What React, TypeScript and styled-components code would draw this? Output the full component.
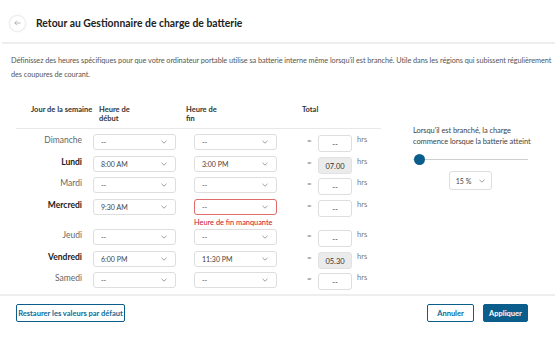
import React from "react";
import styled, { createGlobalStyle } from "styled-components";

const GlobalStyle = createGlobalStyle`
  html, body { margin: 0; padding: 0; background: #fff; }
  body { font-family: Lato, "Open Sans", sans-serif; }
  * { box-sizing: border-box; }
`;

const BLUE = "#0b5e8b";

const Page = styled.div`
  width: 560px;
  height: 338px;
  background: #fff;
  display: flex;
  flex-direction: column;
  overflow: hidden;
`;

const Header = styled.header`
  height: 44px;
  margin: 0 5px 0 2px;
  padding: 4px 0 0 7px;
  border-bottom: 2px solid #eeeeee;
  display: flex;
  align-items: center;
  gap: 10px;
`;

const BackButton = styled.button`
  width: 17px;
  height: 17px;
  border-radius: 50%;
  border: 1px solid #ececec;
  background: #fff;
  box-shadow: 0 0 2px rgba(0, 0, 0, 0.08);
  display: flex;
  align-items: center;
  justify-content: center;
  padding: 0;
  color: #8a8a8a;
`;

const Title = styled.h1`
  margin: 0;
  font-size: 10.4px;
  font-weight: 700;
  color: #222;
`;

const Description = styled.p`
  margin: 0;
  padding: 10px 8px 0 11px;
  font-size: 7.3px;
  letter-spacing: -0.05px;
  line-height: 14px;
  color: #555;
`;

const Main = styled.div`
  display: flex;
  margin-top: 23px;
`;

const Table = styled.div`
  margin-left: 16px;
  width: 365px;
`;

const HeadRow = styled.div`
  display: grid;
  grid-template-columns: 83px 87px 116px 1fr;
  padding-bottom: 5px;
  border-bottom: 1px solid #e8e8e8;
`;

const HeadCell = styled.div<{ $pad?: number }>`
  padding-left: ${(p) => p.$pad ?? 0}px;
  font-size: 7.5px;
  line-height: 9px;
  font-weight: 700;
  color: #333;
  white-space: nowrap;
`;

const Rows = styled.div`
  display: flex;
  flex-direction: column;
  gap: 3.5px;
  margin-top: 5px;
`;

const DayRow = styled.div`
  display: flex;
  align-items: flex-start;
  min-height: 18px;
`;

const DayLabel = styled.div<{ $active?: boolean }>`
  width: 66px;
  margin-right: 11px;
  text-align: right;
  font-size: 8.5px;
  line-height: 13px;
  font-weight: ${(p) => (p.$active ? 700 : 400)};
  color: ${(p) => (p.$active ? "#222" : "#666")};
`;

const SelectCol = styled.div<{ $gap?: number }>`
  width: 83px;
  margin-right: ${(p) => p.$gap ?? 0}px;
  display: flex;
  flex-direction: column;
`;

const Select = styled.div<{ $error?: boolean }>`
  height: 16px;
  border: 1px solid ${(p) => (p.$error ? "#e06b6b" : "#dedede")};
  border-radius: 3px;
  padding: 0 8px 0 7px;
  display: flex;
  align-items: center;
  justify-content: space-between;
  font-size: 7px;
  color: #444;
  background: #fff;
`;

const ErrorText = styled.div`
  margin-top: 4px;
  font-size: 7.4px;
  line-height: 7px;
  color: #c8102e;
  white-space: nowrap;
`;

const Equals = styled.div`
  width: 12px;
  padding-left: 1px;
  font-size: 8px;
  line-height: 12px;
  color: #777;
`;

const TotalBox = styled.div<{ $filled?: boolean }>`
  width: 34px;
  height: 17px;
  margin-top: 1px;
  border: 1px solid ${(p) => (p.$filled ? "#e2e2e2" : "#dedede")};
  border-radius: 3px;
  background: ${(p) => (p.$filled ? "#ebebeb" : "#fff")};
  display: flex;
  align-items: center;
  justify-content: center;
  padding-top: 2px;
  font-size: 7.5px;
  color: #333;
`;

const Unit = styled.div`
  margin-left: 5px;
  font-size: 7.5px;
  line-height: 12px;
  color: #777;
`;

const Side = styled.div`
  margin-left: 32px;
  width: 115px;
  padding-top: 20px;
  display: flex;
  flex-direction: column;
`;

const SideText = styled.div`
  font-size: 7.5px;
  letter-spacing: -0.08px;
  line-height: 11px;
  color: #444;
  white-space: nowrap;
`;

const Slider = styled.div`
  position: relative;
  margin-top: 7px;
  height: 11px;
  display: flex;
  align-items: center;
`;

const Track = styled.div`
  flex: 1;
  height: 1px;
  background: #cfcfcf;
`;

const Thumb = styled.div`
  position: absolute;
  left: 1px;
  top: 0;
  width: 11px;
  height: 11px;
  border-radius: 50%;
  background: ${BLUE};
`;

const PercentSelect = styled.div`
  align-self: center;
  margin-top: 6px;
  width: 43px;
  height: 19px;
  border: 1px solid #dedede;
  border-radius: 3px;
  display: flex;
  align-items: center;
  justify-content: center;
  gap: 8px;
  font-size: 7px;
  color: #444;
`;

const Footer = styled.footer`
  margin: auto 5px 0 0;
  height: 44px;
  border-top: 2px solid #eeeeee;
  padding: 8px 27px 0 16px;
  display: flex;
  align-items: flex-start;
`;

const Button = styled.button<{ $primary?: boolean; $w: number }>`
  width: ${(p) => p.$w}px;
  height: 18px;
  border-radius: 2px;
  border: 1px solid ${BLUE};
  background: ${(p) => (p.$primary ? BLUE : "#fff")};
  color: ${(p) => (p.$primary ? "#fff" : "#0d6a97")};
  font-family: Lato, sans-serif;
  font-size: 7.5px;
  font-weight: 700;
  padding: 0;
  white-space: nowrap;
`;

const Spacer = styled.div`
  flex: 1;
`;

const ButtonGap = styled.div`
  width: 9px;
`;

const Chevron = () => (
  <svg width="6" height="4" viewBox="0 0 6 4" fill="none">
    <path d="M0.5 0.8 L3 3.2 L5.5 0.8" stroke="#888" strokeWidth="0.8" />
  </svg>
);

const Arrow = () => (
  <svg width="7" height="6" viewBox="0 0 7 6" fill="none">
    <path d="M6.5 3 H0.8 M3 0.7 L0.8 3 L3 5.3" stroke="#999" strokeWidth="0.7" />
  </svg>
);

type Day = {
  name: string;
  start: string;
  end: string;
  total: string;
  active?: boolean;
  error?: boolean;
};

const days: Day[] = [
  { name: "Dimanche", start: "--", end: "--", total: "--" },
  { name: "Lundi", start: "8:00 AM", end: "3:00 PM", total: "07.00", active: true },
  { name: "Mardi", start: "--", end: "--", total: "--" },
  { name: "Mercredi", start: "9:30 AM", end: "--", total: "--", active: true, error: true },
  { name: "Jeudi", start: "--", end: "--", total: "--" },
  { name: "Vendredi", start: "6:00 PM", end: "11:30 PM", total: "05.30", active: true },
  { name: "Samedi", start: "--", end: "--", total: "--" },
];

export default function App() {
  return (
    <Page>
      <GlobalStyle />
      <Header>
        <BackButton aria-label="Retour">
          <Arrow />
        </BackButton>
        <Title>Retour au Gestionnaire de charge de batterie</Title>
      </Header>
      <Description>
        Définissez des heures spécifiques pour que votre ordinateur portable utilise sa batterie interne même
        lorsqu'il est branché. Utile dans les régions qui subissent régulièrement des coupures de courant.
      </Description>
      <Main>
        <Table>
          <HeadRow>
            <HeadCell $pad={15}>Jour de la semaine</HeadCell>
            <HeadCell>
              Heure de
              <br />
              début
            </HeadCell>
            <HeadCell>
              Heure de
              <br />
              fin
            </HeadCell>
            <HeadCell>Total</HeadCell>
          </HeadRow>
          <Rows>
            {days.map((d) => (
              <DayRow key={d.name}>
                <DayLabel $active={d.active}>{d.name}</DayLabel>
                <SelectCol $gap={18}>
                  <Select>
                    <span>{d.start}</span>
                    <Chevron />
                  </Select>
                </SelectCol>
                <SelectCol $gap={29}>
                  <Select $error={d.error}>
                    <span>{d.end}</span>
                    <Chevron />
                  </Select>
                  {d.error && <ErrorText>Heure de fin manquante</ErrorText>}
                </SelectCol>
                <Equals>=</Equals>
                <TotalBox $filled={d.total !== "--"}>{d.total}</TotalBox>
                <Unit>hrs</Unit>
              </DayRow>
            ))}
          </Rows>
        </Table>
        <Side>
          <SideText>Lorsqu'il est branché, la charge</SideText>
          <SideText>commence lorsque la batterie atteint</SideText>
          <Slider>
            <Track />
            <Thumb />
          </Slider>
          <PercentSelect>
            <span>15 %</span>
            <Chevron />
          </PercentSelect>
        </Side>
      </Main>
      <Footer>
        <Button $w={109}>Restaurer les valeurs par défaut</Button>
        <Spacer />
        <Button $w={47}>Annuler</Button>
        <ButtonGap />
        <Button $primary $w={45}>
          Appliquer
        </Button>
      </Footer>
    </Page>
  );
}
